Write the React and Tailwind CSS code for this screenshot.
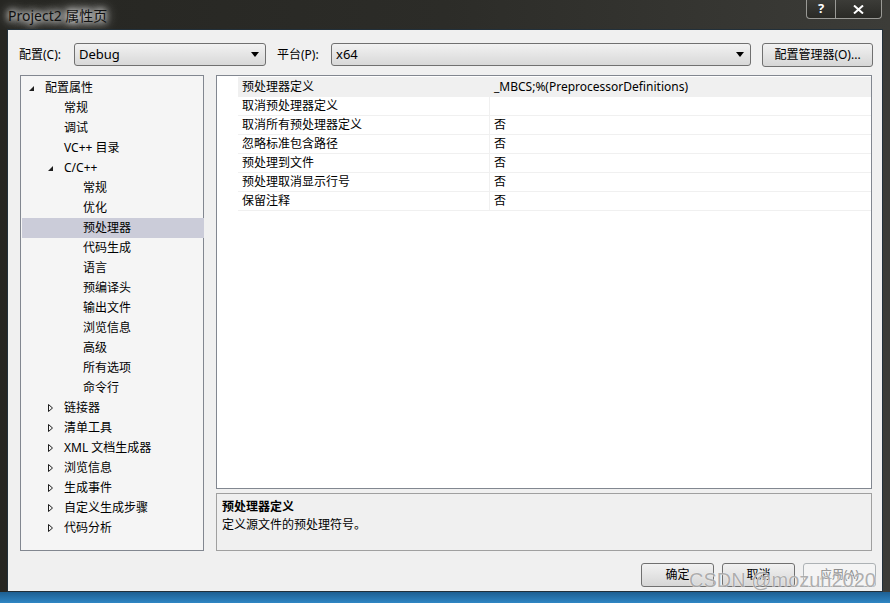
import React from 'react';

const FONT = { fontFamily: '"Noto Sans", "Noto Sans CJK SC", sans-serif' };

const tree = [
  { label: '配置属性', level: 0, arrow: 'open' },
  { label: '常规', level: 1 },
  { label: '调试', level: 1 },
  { label: 'VC++ 目录', level: 1 },
  { label: 'C/C++', level: 1, arrow: 'open' },
  { label: '常规', level: 2 },
  { label: '优化', level: 2 },
  { label: '预处理器', level: 2, selected: true },
  { label: '代码生成', level: 2 },
  { label: '语言', level: 2 },
  { label: '预编译头', level: 2 },
  { label: '输出文件', level: 2 },
  { label: '浏览信息', level: 2 },
  { label: '高级', level: 2 },
  { label: '所有选项', level: 2 },
  { label: '命令行', level: 2 },
  { label: '链接器', level: 1, arrow: 'closed' },
  { label: '清单工具', level: 1, arrow: 'closed' },
  { label: 'XML 文档生成器', level: 1, arrow: 'closed' },
  { label: '浏览信息', level: 1, arrow: 'closed' },
  { label: '生成事件', level: 1, arrow: 'closed' },
  { label: '自定义生成步骤', level: 1, arrow: 'closed' },
  { label: '代码分析', level: 1, arrow: 'closed' },
];

const props = [
  ['预处理器定义', '_MBCS;%(PreprocessorDefinitions)'],
  ['取消预处理器定义', ''],
  ['取消所有预处理器定义', '否'],
  ['忽略标准包含路径', '否'],
  ['预处理到文件', '否'],
  ['预处理取消显示行号', '否'],
  ['保留注释', '否'],
];

const indent = ['pl-[3px]', 'pl-[22px]', 'pl-[41px]'];

function Arrow({ kind }) {
  if (kind === 'open') {
    return (
      <svg width="13" height="10" viewBox="0 0 13 10">
        <path d="M9 3 L9 8 L4 8 Z" fill="#1e1e1e" />
      </svg>
    );
  }
  if (kind === 'closed') {
    return (
      <svg width="13" height="10" viewBox="0 0 13 10">
        <path d="M4.5 1.5 L8.5 5 L4.5 8.5 Z" fill="none" stroke="#1e1e1e" strokeWidth="1" />
      </svg>
    );
  }
  return <span className="w-[13px]" />;
}

function Combo({ value, width }) {
  return (
    <div className={`${width} h-[23px] flex items-center justify-between rounded-[3px] border border-[#707070] bg-gradient-to-b from-[#f2f2f2] to-[#d8d8d8] pl-[4px] pr-[6px] text-[13px] text-black`}>
      <span>{value}</span>
      <svg width="8" height="5" viewBox="0 0 8 5">
        <path d="M0 0 L8 0 L4 5 Z" fill="#000" />
      </svg>
    </div>
  );
}

function Btn({ children, disabled }) {
  return (
    <div className={`w-[73px] h-[24px] flex items-center justify-center rounded-[3px] border text-[12px] ${disabled ? 'border-[#adb2b5] bg-[#f4f4f4] text-[#8d8d8d]' : 'border-[#707070] bg-gradient-to-b from-[#f2f2f2] to-[#d6d6d6] text-black'}`}>
      {children}
    </div>
  );
}

export default function App() {
  return (
    <div style={FONT} className="w-[890px] h-[603px] flex flex-col bg-gradient-to-r from-[#262622] via-[#2c2c28] to-[#3c3c38] overflow-hidden">
      {/* title bar */}
      <div className="h-[29px] flex justify-between shrink-0">
        <div className="pl-[8px] pt-[5px] text-[14px] text-[#111] [text-shadow:0_0_6px_#fff,0_0_10px_#fff,0_0_14px_#ddd]">
          Project2 属性页
        </div>
        <div className="flex mr-[8px] h-[19px]">
          <div className="w-[30px] flex items-center justify-center border border-t-0 border-[#9a9a96] rounded-bl-[4px] bg-gradient-to-b from-[#3c3c38] to-[#2a2a26] text-white text-[13px] font-bold">?</div>
          <div className="w-[46px] flex items-center justify-center border border-t-0 border-l-0 border-[#9a9a96] rounded-br-[4px] bg-gradient-to-b from-[#3c3c38] to-[#2a2a26]">
            <svg width="11" height="9" viewBox="0 0 11 9">
              <path d="M1 0.5 L10 8.5 M10 0.5 L1 8.5" stroke="#fff" strokeWidth="2" />
            </svg>
          </div>
        </div>
      </div>

      {/* client */}
      <div className="relative flex-1 mx-[7px] border border-[#22303a] bg-[#f0f0f0] flex flex-col text-[12px] text-black">
        {/* config row */}
        <div className="flex items-center h-[23px] mt-[13px] pl-[11px]">
          <span className="w-[55px] text-[12px]">配置(C):</span>
          <Combo value="Debug" width="w-[192px]" />
          <span className="ml-[11px] w-[54px] text-[12px]">平台(P):</span>
          <Combo value="x64" width="w-[420px]" />
          <div className="ml-[11px] w-[111px] h-[24px] flex items-center justify-center rounded-[3px] border border-[#707070] bg-gradient-to-b from-[#f2f2f2] to-[#d6d6d6] text-[12px]">
            配置管理器(O)...
          </div>
        </div>

        {/* main area */}
        <div className="flex mt-[9px] pl-[12px] gap-[12px] h-[477px]">
          {/* tree */}
          <div className="w-[184px] h-[476px] border border-[#828790] bg-[#f5f5f5] pt-[2px] pl-[1px]">
            {tree.map((t, i) => (
              <div key={i} className={`h-[20px] w-[182px] flex items-center ${indent[t.level]} ${t.selected ? 'bg-[#cbccd9]' : ''}`}>
                <Arrow kind={t.arrow} />
                <span className="ml-[7px]">{t.label}</span>
              </div>
            ))}
          </div>

          {/* right */}
          <div className="w-[656px] flex flex-col gap-[4px]">
            <div className="h-[414px] border border-[#828790] bg-white pl-[21px] pt-[1px]">
              {props.map(([k, v], i) => (
                <div key={i} className={`h-[19px] flex border-b border-[#f0f0f0] ${i === 0 ? 'bg-[#f0f0f0] h-[20px] pt-[1px]' : ''}`}>
                  <div className="w-[252px] pl-[4px] flex items-center border-r border-[#f0f0f0]">{k}</div>
                  <div className="flex-1 pl-[4px] flex items-center">{v}</div>
                </div>
              ))}
            </div>
            <div className="h-[58px] border border-[#a0a0a0] bg-[#f0f0f0] px-[5px] pt-[4px] leading-[18px]">
              <div className="font-bold">预处理器定义</div>
              <div>定义源文件的预处理符号。</div>
            </div>
          </div>
        </div>

        {/* buttons */}
        <div className="flex justify-end gap-[8px] pr-[6px] mt-[11px]">
          <Btn>确定</Btn>
          <Btn>取消</Btn>
          <Btn disabled>应用(A)</Btn>
        </div>

        {/* watermark */}
        <div
          style={{ fontFamily: '"Liberation Sans Narrow", "Liberation Sans", sans-serif' }}
          className="absolute right-[6px] bottom-[1px] text-[20px] leading-none text-[#a8a8a8] opacity-90 [text-shadow:0_0_1px_#fff,0_0_1px_#fff] pointer-events-none"
        >
          CSDN @mozun2020
        </div>
      </div>

      {/* bottom frame */}
      <div className="h-[11px] shrink-0 bg-gradient-to-b from-[#1d5f92] to-[#2f86c4]" />
    </div>
  );
}
